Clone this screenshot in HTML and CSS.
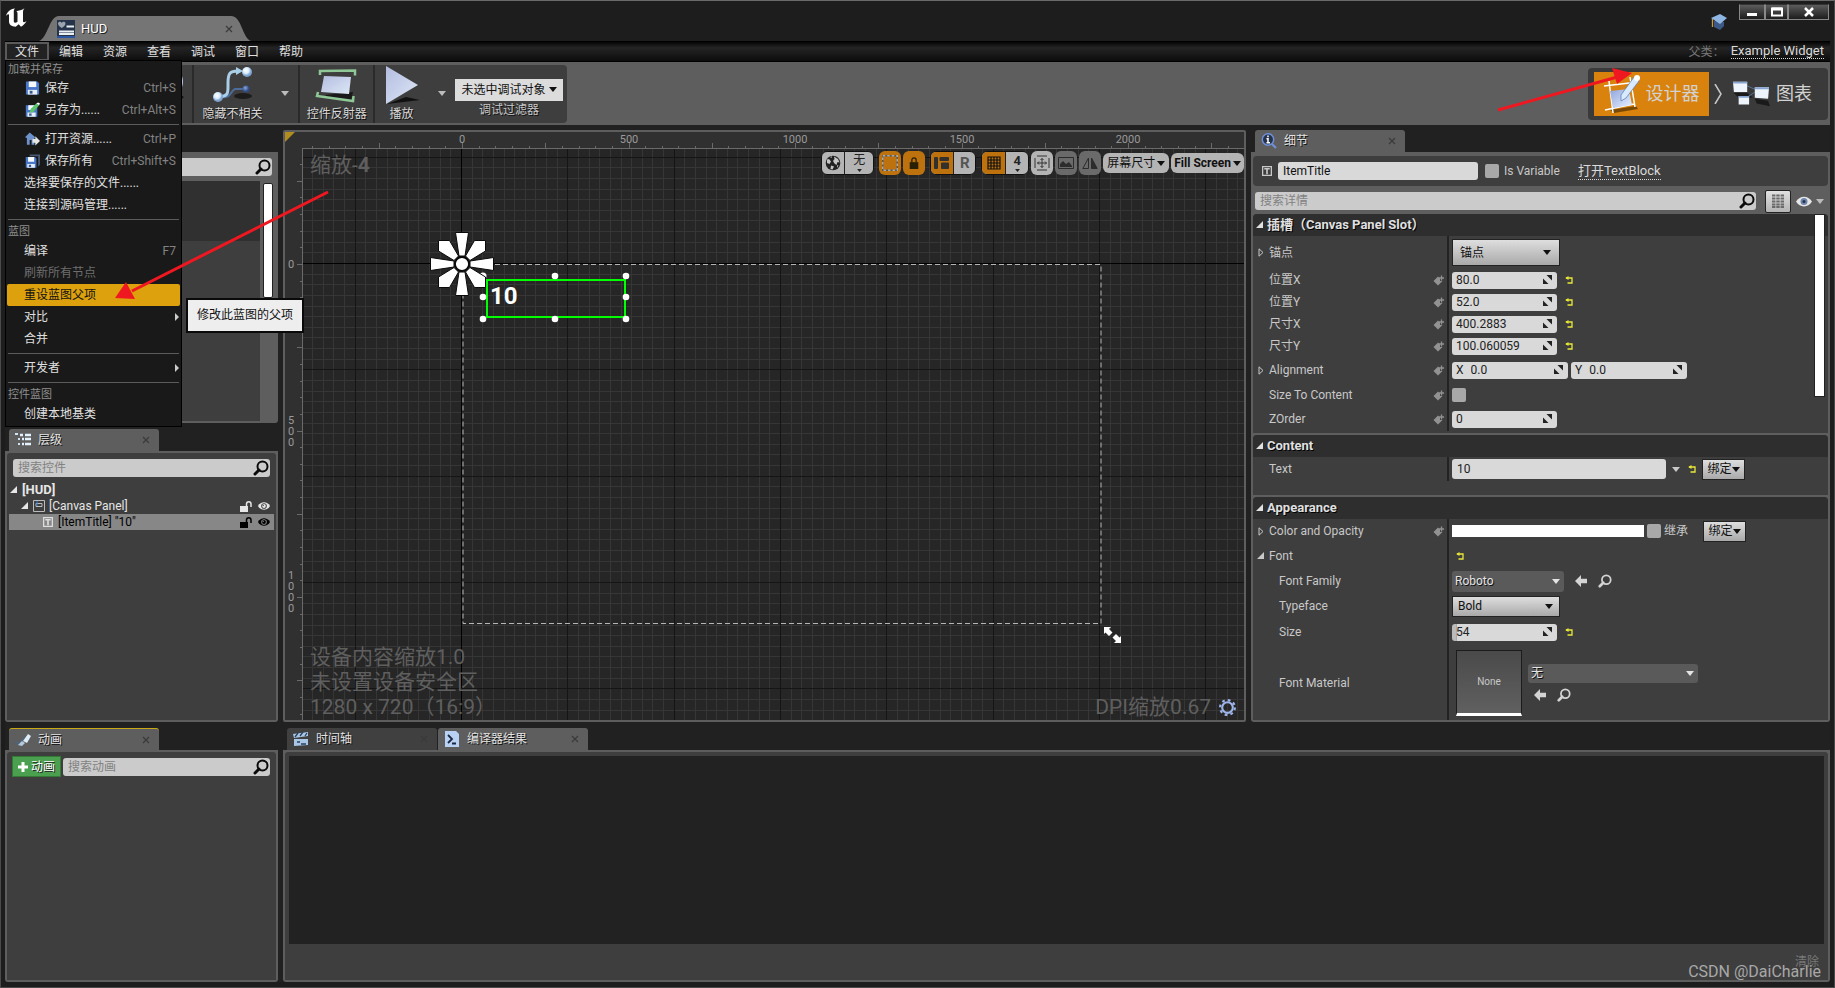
FILE: index.html
```html
<!DOCTYPE html>
<html lang="zh-CN">
<head>
<meta charset="utf-8">
<title>HUD</title>
<link rel="stylesheet" href="styles.css">
</head>
<body>
<svg class="defs" aria-hidden="true">
  <defs>
    <linearGradient id="blue" x1="0" y1="0" x2="1" y2="1"><stop offset="0" stop-color="#8fa4dc"/><stop offset="1" stop-color="#e8f2ff"/></linearGradient>
    <linearGradient id="steel" x1="0" y1="0" x2="1" y2="1"><stop offset="0" stop-color="#b4bce0"/><stop offset="1" stop-color="#dde8f6"/></linearGradient>
    <radialGradient id="ball" cx=".4" cy=".35"><stop offset="0" stop-color="#fff"/><stop offset=".6" stop-color="#d9ecfb"/><stop offset="1" stop-color="#7fa4d0"/></radialGradient>
    <radialGradient id="ball2" cx=".4" cy=".35"><stop offset="0" stop-color="#8ba6d8"/><stop offset="1" stop-color="#2f4a86"/></radialGradient>
  </defs>
  <symbol id="mag" viewBox="0 0 16 16"><circle cx="9.5" cy="6.5" r="5" fill="none" stroke="currentColor" stroke-width="2"/><path d="M6 10 2 14" stroke="currentColor" stroke-width="3" stroke-linecap="round"/></symbol>
  <symbol id="caret" viewBox="0 0 8 5"><path d="M0 0h8L4 5z" fill="currentColor"/></symbol>
  <symbol id="open" viewBox="0 0 8 8"><path d="M7 0v7H0z" fill="currentColor"/></symbol>
  <symbol id="closed" viewBox="0 0 6 9"><path d="M1 .8v7.400L5 4.500z" fill="none" stroke="currentColor"/></symbol>
  <symbol id="x" viewBox="0 0 8 8"><path d="m1 1 6 6M7 1 1 7" stroke="currentColor" stroke-width="1.200"/></symbol>
  <symbol id="spin" viewBox="0 0 10 10"><path d="M3.500 0H9v5.500zM0 3.500V9h5.500z" fill="currentColor"/></symbol>
  <symbol id="reset" viewBox="0 0 8 8"><path d="M1 2h6v5H2.500" fill="none" stroke="currentColor" stroke-width="1.300"/><path d="M3.500 0v4L.2 2z" fill="currentColor"/></symbol>
  <symbol id="key" viewBox="0 0 11 11"><path d="M5 1.500 7 3.500V6h2.500L5 10.500.5 6z" fill="#929292"/><path d="M8.500.5v5M6 3h5" stroke="#929292" stroke-width="1.300"/></symbol>
  <symbol id="eye" viewBox="0 0 14 10"><path d="M0 5C3-.8 11-.8 14 5 11 10.800 3 10.800 0 5z" fill="currentColor"/><circle cx="7" cy="5" r="3.300" fill="var(--hole)"/><circle cx="7" cy="5" r="2.200" fill="currentColor"/><circle cx="6.200" cy="4.200" r=".8" fill="var(--hole)"/></symbol>
  <symbol id="unlock" viewBox="0 0 12 11"><path d="M0 5h8v6H0z" fill="currentColor"/><path d="M6.500 5V3a2.200 2.200 0 0 1 4.500 0v3" fill="none" stroke="currentColor" stroke-width="1.500"/></symbol>
  <symbol id="left" viewBox="0 0 12 12"><path d="M0 6 6 0v3.800h6v4.400H6V12z" fill="currentColor"/></symbol>
  <symbol id="tbox" viewBox="0 0 11 11"><path d="M.7.7h9.600v9.600H.7z" fill="none" stroke="currentColor" stroke-width="1.400"/><path d="M2.500 3h6M5.500 3v6" stroke="currentColor" stroke-width="1.800"/></symbol>
  <symbol id="disk" viewBox="0 0 16 16"><path d="M1 1h12l2 2v12H1z" fill="#4a78c8"/><path d="M4 1h8v6H4z" fill="#f4f8ff"/><path d="M3 10h10v5H3z" fill="#e6ecf8"/><path d="M5 11h3v3H5z" fill="#35588f"/></symbol>
</svg>

<header class="titlebar">
  <svg class="logo" viewBox="0 0 24 20" aria-label="Unreal"><path d="M1 8C2 4 5 1 10 .500 8.500 2 8.800 3 8.800 5v8.500c0 1.500 2.200 1.500 3.700.300V5.500c0-1.500-.5-2-1.300-2.300C13.500 2.800 17 2 19.500.200c-1.200 1.500-1.500 2.500-1.500 4.300v8.700c0 1.500 1.800 1.300 3.500-.2-1 2.500-3.500 4.500-5.500 5.700l-2.300-2.400-3 2.400C6.500 18.500 4 16.500 4 13.500V7C4 5.500 2.500 6 1 8z" fill="#fff"/></svg>
  <div class="maintab">
    <svg class="maintab-shape" viewBox="0 0 212 25" preserveAspectRatio="none"><path d="M0 25C9 22 10 0 20 0h172c11 0 11 22 20 25z" fill="#757575"/></svg>
    <svg class="i18" viewBox="0 0 18 18"><path d="M0 0h18v18H0z" fill="#25344a"/><path d="M1 3.500C1 1.500 4 1 4.800 3 5.600 1 8.500 1.500 8.500 3.500S6 7 4.800 8C3.500 7 1 5.500 1 3.500z" fill="#9aa3ad"/><path d="M9.500 6.500H17M2 11.500h15M2 14h15" stroke="#e8eef4" stroke-width="1.800"/><path d="M0 17h18" stroke="#2f62c0" stroke-width="1.500"/></svg>
    <span>HUD</span>
    <button class="tabx" aria-label="关闭"><svg class="i8"><use href="#x"/></svg></button>
  </div>
  <svg class="cap" viewBox="0 0 16 16"><path d="M3 7v6l6 3 4-4V8z" fill="#3d5a86"/><path d="M0 4 9 0l7 4-7 6z" fill="#8fb6e2"/><path d="M1.500 5v8" stroke="#c99a4a" stroke-width="1.300"/></svg>
  <div class="winbtns">
    <button aria-label="最小化" class="w-min"><svg viewBox="0 0 12 10"><path d="M1 6h10v3H1z" fill="#fff"/></svg></button><button aria-label="最大化" class="w-max"><svg viewBox="0 0 12 10"><path d="M1 1.500h10v7H1z" fill="none" stroke="#fff" stroke-width="2"/><path d="M1 2h10" stroke="#fff" stroke-width="3"/></svg></button><button aria-label="关闭窗口" class="w-close"><svg viewBox="0 0 12 10"><path d="m2 1 8 8M10 1 2 9" stroke="#fff" stroke-width="2.500"/></svg></button>
  </div>
</header>

<nav class="menubar">
  <button class="on">文件</button><button>编辑</button><button>资源</button><button>查看</button><button>调试</button><button>窗口</button><button>帮助</button>
  <span class="parent">父类：</span><a href="#">Example Widget</a>
</nav>

<div class="toolbar">
  <div class="tools">
    <div class="tool-lead"><svg viewBox="0 0 6 60"><path d="M0 9c4 1 5 8 3 14l-3 3z" fill="#b9c9ea"/><path d="m0 30 5 3-5 5z" fill="#151515"/></svg></div>
    <button class="tool hide"><svg viewBox="0 0 44 36"><ellipse cx="32" cy="29" rx="9" ry="3" fill="#1c1c1c"/><path d="M9 30c12 2 10-6 15-8h8" fill="none" stroke="#4c6c9c" stroke-width="2"/><path d="M8 30c10-1 9-4 9-14s2-12 10-12" fill="none" stroke="#a9cfe8" stroke-width="3"/><path d="m25 0 7 4-7 4z" fill="#a9cfe8"/><circle cx="7" cy="30" r="5" fill="url(#ball)"/><circle cx="36" cy="5" r="5" fill="url(#ball)"/><circle cx="35" cy="22" r="3.500" fill="url(#ball2)"/></svg><span>隐藏不相关</span></button>
    <button class="drop" aria-label="隐藏选项"><svg class="caret"><use href="#caret"/></svg></button>
    <button class="tool reflect"><svg viewBox="0 0 44 36"><path d="m10 28 28-3-2 8-22-2z" fill="#1a1a1a"/><path d="M9 9 36 10l-2 17-28-2z" fill="url(#steel)"/><path d="M5 8V4l35-.500v5M3 25l-1 4 36 5 .500-5" fill="none" stroke="#8fc796" stroke-width="2.500"/></svg><span>控件反射器</span></button>
    <button class="tool play"><svg viewBox="0 0 36 40"><path d="m3 38 33-4-14-3z" fill="#111"/><path d="M2 0v38l32-19z" fill="url(#steel)"/></svg><span>播放</span></button>
    <button class="drop" aria-label="播放选项"><svg class="caret"><use href="#caret"/></svg></button>
    <div class="debug"><button>未选中调试对象<svg class="caret"><use href="#caret"/></svg></button><span>调试过滤器</span></div>
  </div>
  <div class="modes">
    <button class="mode active"><svg viewBox="0 0 38 40"><path d="m8 36 26-4 2 3-24 4z" fill="#7a4a05"/><path d="M2 12 36 8M3 36l29-6M7 7l4 32M28 3l5 30" stroke="#fff" stroke-width="1.500"/><path d="m8 17 19-2 3 16-19 3z" fill="url(#blue)"/><path d="m19 27 0-6L32 3l5 4-13 17z" fill="#d9eaff" stroke="#5577a8" stroke-width=".7"/><circle cx="35" cy="4" r="3" fill="#fff"/></svg>设计器</button>
    <svg class="chev" viewBox="0 0 8 20"><path d="m1 0 6 10-6 10" fill="none" stroke="#c8c8c8" stroke-width="1.500"/></svg>
    <button class="mode"><svg viewBox="0 0 40 30"><path d="M2 14h14l6 5-16-1zM24 20l14 2 2 6-14-3z" fill="#1a1a1a"/><path d="M15 6 24 10M15 19l9-6" stroke="#5c7592"/><path d="M1 2h15v11H2zM24 8h15l-1 12-14-1zM7 17h11v9H7z" fill="#eef4fb"/><path d="M1 2h15v2H1zM24 8h15v2H24zM7 17h11v2H7z" fill="#88a5d2"/></svg>图表</button>
  </div>
</div>

<main class="work">
  <div class="row top">
    <aside class="leftcol">
      <section class="dock palette">
        <div class="frame"><div class="search"><input type="text" aria-label="搜索调色板"><svg class="i16"><use href="#mag"/></svg></div>
          <div class="pal-body"><div class="pal-list"></div><div class="pal-scroll"></div></div></div>
      </section>
      <section class="dock">
        <div class="tabs"><div class="tab"><svg class="i16" viewBox="0 0 16 14"><path d="M0 1h3M3 6h2M3 11h2" stroke="#cfe3f5" stroke-width="2"/><path d="M5 2h3M7 6h2M7 11h2M10 2h6M10 6h6M10 11h6" stroke="#e4f2ff" stroke-width="2.500"/></svg><span>层级</span><button class="tabx" aria-label="关闭层级"><svg class="i8"><use href="#x"/></svg></button></div></div>
        <div class="frame"><div class="pane">
          <div class="search"><input type="text" placeholder="搜索控件" aria-label="搜索控件"><svg class="i16"><use href="#mag"/></svg></div>
          <ul class="tree">
            <li class="t0"><svg class="i8"><use href="#open"/></svg><b>[HUD]</b></li>
            <li class="t1"><svg class="i8"><use href="#open"/></svg><svg class="i12" viewBox="0 0 12 12"><path d="M.5.5h11v11H.5z" fill="none" stroke="#bbb"/><path d="M3 3.500h6v3H3z" fill="none" stroke="#bbb"/><path d="M4 1v5" stroke="#2a7fd0"/></svg><span>[Canvas Panel]</span><svg class="i12 end"><use href="#unlock"/></svg><svg class="i12"><use href="#eye"/></svg></li>
            <li class="t2"><svg class="i10"><use href="#tbox"/></svg><span>[ItemTitle] "10"</span><svg class="i12 end"><use href="#unlock"/></svg><svg class="i12"><use href="#eye"/></svg></li>
          </ul>
        </div></div>
      </section>
    </aside>

    <section class="viewport" id="viewport">
      <svg class="grid" id="grid" aria-hidden="true"></svg>
      <svg class="stage" aria-hidden="true">
        <path d="M0 0h10L0 10z" fill="#b18c1e"/>
        <path d="M178 132.500h638v359H178z" fill="none" stroke="#b5b5b5" stroke-dasharray="5 3"/>
        <g fill="#fff"><circle cx="198" cy="144" r="3.500"/></g>
        <g transform="translate(177 132)" fill="#fff" stroke="#0a0a0a" stroke-width="1">
          <g id="petals"><path d="M-6.500-31.500h13L3-8h-6z"/><path d="M-31.500-6.500v13L-8 3v-6z"/><path d="M-6.500 31.500h13L3 8h-6z"/><path d="M31.500-6.500v13L8 3v-6z"/>
          <path d="M-23.500-23.500h11L-3.500-8-8-3.500-23.500-13z"/><path d="M23.500-23.500h-11L3.500-8 8-3.500 23.500-13z"/><path d="M-23.500 23.500h11L-3.500 8-8 3.500-23.500 13z"/><path d="M23.500 23.500h-11L3.500 8 8 3.500 23.500 13z"/></g>
          <circle r="7" stroke-width="1.800"/>
        </g>
        <path d="M202 148h138v37H202z" fill="none" stroke="#0f0" stroke-width="2"/>
        <g fill="#fff"><circle cx="270" cy="144" r="3.300"/><circle cx="341" cy="144" r="3.300"/><circle cx="198" cy="165" r="3.300"/><circle cx="341" cy="165" r="3.300"/><circle cx="198" cy="187" r="3.300"/><circle cx="270" cy="187" r="3.300"/><circle cx="341" cy="187" r="3.300"/></g>
        <text x="205" y="172" class="item">10</text>
        <path d="M819 495h7l-2 2 3.500 3.500-3.500 3.500-3.500-3.500-1.500 1.500zM836 511h-7l2-2-3.500-3.500 3.500-3.500 3.500 3.500 1.500-1.500z" fill="#fff"/>
      </svg>
      <div class="zoomlabel">缩放-<b>4</b></div>
      <div class="notes"><div>设备内容缩放1.0</div><div>未设置设备安全区</div><div>1280 x 720（16:9）</div></div>
      <div class="dpi">DPI缩放0.67<button aria-label="DPI设置"><svg viewBox="0 0 16 16"><circle cx="8" cy="8" r="5" fill="none" stroke="#9db4ea" stroke-width="2"/><circle cx="8" cy="8" r="7" fill="none" stroke="#9db4ea" stroke-width="2" stroke-dasharray="2.600 2.900"/></svg></button></div>
      <div class="vptools">
        <div class="grp"><button class="w23" aria-label="本地化"><svg class="i16" viewBox="0 0 16 16"><circle cx="8" cy="8" r="7.300" fill="#222"/><path d="M9 1.500 13 4l1.500 3.500-2-.5-1 3-2-1.500L8 6l1.500-2zM2 4.500l2-.5 2 2.500L4.500 9 2 8zM6 10.500l3 1-1.500 3-2-.5zM5 2l2-.8L6.500 3zM12 10.500l1.500-.5-1.500 3z" fill="#c4c4c4"/></svg></button><button class="w29 two">无<svg class="mini"><use href="#caret"/></svg></button></div>
        <button class="solo org gapl" aria-label="显示轮廓"><svg class="i16" viewBox="0 0 16 16"><path d="M.7.7h14.600v14.600H.7z" fill="none" stroke="#5c564c" stroke-width="1.500"/><path d="M.7.7h14.600v14.600H.7z" fill="none" stroke="#aaa" stroke-width="1.500" stroke-dasharray="2.500 2"/></svg></button>
        <button class="solo org" aria-label="锁定"><svg class="i12" viewBox="0 0 12 14"><path d="M1 6h10v8H1z" fill="#2a2005"/><path d="M3.500 6V3.500a2.500 2.500 0 0 1 5 0V6" fill="none" stroke="#2a2005" stroke-width="1.500"/></svg></button>
        <div class="grp gapl"><button class="w23 org" aria-label="布局"><svg class="i16" viewBox="0 0 16 14"><rect y="1" width="4" height="12" rx="1" fill="#33312e"/><rect x="5.500" y="1" width="9.500" height="4" rx="1" fill="#33312e"/><rect x="7" y="6.500" width="8" height="6.500" rx="1" fill="#33312e"/></svg></button><button class="w23 r">R</button></div>
        <div class="grp gapl"><button class="w24 org" aria-label="网格"><svg class="i14" viewBox="0 0 14 14"><path d="M1 1h12v12H1zM4 1v12M7 1v12M10 1v12M1 4h12M1 7h12M1 10h12" fill="none" stroke="#111" stroke-width="1.200"/></svg></button><button class="w24 two"><b>4</b><svg class="mini"><use href="#caret"/></svg></button></div>
        <button class="solo" aria-label="缩放到合适"><svg class="i16" viewBox="0 0 16 16"><path d="M3 1h10M3 15h10M1 3v10M15 3v10M3.500 8h9M8 3.500v9M5 6.500 3.500 8 5 9.500M11 6.500 12.500 8 11 9.500M6.500 5 8 3.500 9.500 5M6.500 11 8 12.500 9.500 11" fill="none" stroke="#333"/></svg></button>
        <button class="solo dim" aria-label="背景"><svg class="i16" viewBox="0 0 16 12"><path d="M.5.5h15v11H.5z" fill="none" stroke="#2c2c2c"/><path d="M2 10V7l3-3 3 3 3-2 3 4v1z" fill="#2c2c2c"/></svg></button>
        <button class="solo dim" aria-label="镜像"><svg class="i16" viewBox="0 0 16 12"><path d="M6.500 1v10.500H.8zM9.500 1v10.500h5.700z" fill="none" stroke="#2c2c2c"/><path d="M9.500 1v10.500h5.700z" fill="#2c2c2c"/></svg></button>
        <button class="pill">屏幕尺寸<svg class="caret"><use href="#caret"/></svg></button>
        <button class="pill"><b>Fill Screen</b><svg class="caret"><use href="#caret"/></svg></button>
      </div>
    </section>

    <section class="dock details">
      <div class="tabs"><div class="tab"><svg class="i16" viewBox="0 0 16 16"><circle cx="7" cy="6.500" r="5.700" fill="#25324a" stroke="#6f8fd8" stroke-width="1.500"/><path d="m11 11 4 4" stroke="#6f8fd8" stroke-width="2.200"/><path d="M7 2.500v1.800M5.500 5.800H7v4M5.500 9.800h3.500" stroke="#fff" stroke-width="1.500" fill="none"/></svg><span>细节</span><button class="tabx" aria-label="关闭细节"><svg class="i8"><use href="#x"/></svg></button></div></div>
      <div class="frame">
        <div class="namerow"><svg class="i10"><use href="#tbox"/></svg><input type="text" value="ItemTitle" aria-label="名称"><label><input type="checkbox">Is Variable</label><a href="#">打开TextBlock</a></div>
        <div class="findrow"><div class="search"><input type="text" placeholder="搜索详情" aria-label="搜索详情"><svg class="i16"><use href="#mag"/></svg></div><button class="matrix" aria-label="属性矩阵"><svg class="i14" viewBox="0 0 14 14"><path d="M1 1.500h12M1 4.500h12M1 7.500h12M1 10.500h12M1 13h12" stroke="#6a6a6a" stroke-width="2" stroke-dasharray="3.400 .9"/></svg></button><button class="viewopt" aria-label="视图选项"><svg viewBox="0 0 16 11"><path d="M0 5.500C4-1 12-1 16 5.500 12 12 4 12 0 5.500z" fill="#e6e6e6"/><circle cx="8" cy="5.500" r="3.500" fill="#6d84ab"/><circle cx="8" cy="5.500" r="1.500" fill="#26334d"/></svg><svg class="caret"><use href="#caret"/></svg></button></div>
        <div class="props">
          <div class="sect">
            <h3><svg class="i8"><use href="#open"/></svg>插槽（Canvas Panel Slot）</h3>
            <div class="p h33"><div class="k"><svg class="arr"><use href="#closed"/></svg>锚点</div><div class="v"><button class="big">锚点<svg class="caret"><use href="#caret"/></svg></button></div></div>
            <div class="p h22"><label class="k" for="px">位置X<svg class="key"><use href="#key"/></svg></label><div class="v"><span class="num"><input id="px" type="text" value="80.0"><svg class="i10"><use href="#spin"/></svg></span><svg class="reset"><use href="#reset"/></svg></div></div>
            <div class="p h22"><label class="k" for="py">位置Y<svg class="key"><use href="#key"/></svg></label><div class="v"><span class="num"><input id="py" type="text" value="52.0"><svg class="i10"><use href="#spin"/></svg></span><svg class="reset"><use href="#reset"/></svg></div></div>
            <div class="p h22"><label class="k" for="sx">尺寸X<svg class="key"><use href="#key"/></svg></label><div class="v"><span class="num"><input id="sx" type="text" value="400.2883"><svg class="i10"><use href="#spin"/></svg></span><svg class="reset"><use href="#reset"/></svg></div></div>
            <div class="p h22"><label class="k" for="sy">尺寸Y<svg class="key"><use href="#key"/></svg></label><div class="v"><span class="num"><input id="sy" type="text" value="100.060059"><svg class="i10"><use href="#spin"/></svg></span><svg class="reset"><use href="#reset"/></svg></div></div>
            <div class="p h26"><div class="k"><svg class="arr"><use href="#closed"/></svg>Alignment<svg class="key"><use href="#key"/></svg></div><div class="v tight"><label class="num wide">X<input type="text" value="0.0"><svg class="i10"><use href="#spin"/></svg></label><label class="num wide">Y<input type="text" value="0.0"><svg class="i10"><use href="#spin"/></svg></label></div></div>
            <div class="p h24"><label class="k" for="stc">Size To Content<svg class="key"><use href="#key"/></svg></label><div class="v"><input id="stc" type="checkbox"></div></div>
            <div class="p h24"><label class="k" for="zo">ZOrder<svg class="key"><use href="#key"/></svg></label><div class="v"><span class="num"><input id="zo" type="text" value="0"><svg class="i10"><use href="#spin"/></svg></span></div></div>
          </div>
          <div class="sect padded">
            <h3><svg class="i8"><use href="#open"/></svg>Content</h3>
            <div class="p h24"><label class="k" for="tx">Text</label><div class="v"><input id="tx" class="long" type="text" value="10"><svg class="caret"><use href="#caret"/></svg><svg class="reset"><use href="#reset"/></svg><button class="bind">绑定<svg class="caret"><use href="#caret"/></svg></button></div></div>
          </div>
          <div class="sect last">
            <h3><svg class="i8"><use href="#open"/></svg>Appearance</h3>
            <div class="p h24"><div class="k"><svg class="arr"><use href="#closed"/></svg>Color and Opacity<svg class="key"><use href="#key"/></svg></div><div class="v tight"><button class="swatch" aria-label="颜色"></button><label class="inherit"><input type="checkbox">继承</label><button class="bind">绑定<svg class="caret"><use href="#caret"/></svg></button></div></div>
            <div class="p h26"><div class="k"><svg class="arr full"><use href="#open"/></svg>Font</div><div class="v"><svg class="reset in"><use href="#reset"/></svg></div></div>
            <div class="p h24"><label class="k sub" for="ff">Font Family</label><div class="v asset"><span class="combo"><select id="ff"><option>Roboto</option></select><svg class="caret"><use href="#caret"/></svg></span><svg class="i12"><use href="#left"/></svg><svg class="i14"><use href="#mag"/></svg></div></div>
            <div class="p h26"><label class="k sub" for="tf">Typeface</label><div class="v"><span class="combo light"><select id="tf"><option>Bold</option></select><svg class="caret"><use href="#caret"/></svg></span></div></div>
            <div class="p h26"><label class="k sub" for="fs">Size</label><div class="v"><span class="num slid"><input id="fs" type="text" value="54"><svg class="i10"><use href="#spin"/></svg></span><svg class="reset"><use href="#reset"/></svg></div></div>
            <div class="p grow"><label class="k sub" for="fm">Font Material</label><div class="v mat"><div class="thumb">None</div><div class="matsel"><span class="combo w170"><select id="fm"><option>无</option></select><svg class="caret"><use href="#caret"/></svg></span><div class="asset"><svg class="i12"><use href="#left"/></svg><svg class="i14"><use href="#mag"/></svg></div></div></div></div>
          </div>
          <div class="scroll"></div>
        </div>
      </div>
    </section>
  </div>

  <div class="row bottom">
    <section class="dock anim">
      <div class="tabs"><div class="tab lit"><svg class="i16" viewBox="0 0 16 14"><path d="M0 9c2-1 3 1 4 3l5-7" fill="none" stroke="#4d6680" stroke-width="1.500"/><path d="m8 8 5-7 3 2-4 7z" fill="#dcecf8"/><path d="m3 12 4-4 3 2-3 3z" fill="#b5c8dc"/></svg><span>动画</span><button class="tabx" aria-label="关闭动画"><svg class="i8"><use href="#x"/></svg></button></div></div>
      <div class="frame"><div class="pane"><div class="animrow"><button class="add"><svg class="i10" viewBox="0 0 10 10"><path d="M5 0v10M0 5h10" stroke="#fff" stroke-width="3"/></svg>动画</button><div class="search"><input type="text" placeholder="搜索动画" aria-label="搜索动画"><svg class="i16"><use href="#mag"/></svg></div></div></div></div>
    </section>
    <section class="dock results">
      <div class="tabs"><div class="tab off"><svg class="i16" viewBox="0 0 16 14"><path d="m0 2 15-2v4L1 6zM1 7h14v6l-14 1z" fill="#a9c6e6"/><path d="m2 5 3-4M7 4l3-4M12 4l2-3M4 10h3M8 12h5" stroke="#29415f" stroke-width="1.300"/></svg><span>时间轴</span><button class="tabx" aria-label="关闭时间轴"><svg class="i8"><use href="#x"/></svg></button></div><div class="tab"><svg class="i16" viewBox="0 0 16 16"><path d="M1 0h11l3 3v13H1z" fill="#b9d2f4"/><path d="m4 4 4 4-4 4M8 12.500h4" fill="none" stroke="#1c2740" stroke-width="1.800"/></svg><span>编译器结果</span><button class="tabx" aria-label="关闭编译器结果"><svg class="i8"><use href="#x"/></svg></button></div></div>
      <div class="frame"><div class="pane logpane"><div class="log"></div><button class="clear">清除</button></div></div>
    </section>
  </div>
</main>

<div class="popup" role="menu">
  <div class="mh">加载并保存</div>
  <button role="menuitem" class="ic"><svg class="i16"><use href="#disk"/></svg>保存<kbd>Ctrl+S</kbd></button>
  <button role="menuitem" class="ic"><svg class="i16" viewBox="0 0 16 16"><use href="#disk" y="2" width="14" height="14"/><path d="m5 11 1-4 6-6 3 2-6 7z" fill="#5bc46a"/><path d="m12 1 3 2 1-2-2-1z" fill="#fff"/></svg>另存为......<kbd>Ctrl+Alt+S</kbd></button>
  <hr>
  <button role="menuitem" class="ic"><svg class="i16" viewBox="0 0 16 16"><path d="m0 6 5-5 6 5-1 1v7H7V9H5v5H2V7z" fill="#6e93cc"/><path d="M8 8h3V5l5 5-5 5v-3H8z" fill="#e6e6e6"/></svg>打开资源......<kbd>Ctrl+P</kbd></button>
  <button role="menuitem" class="ic"><svg class="i16" viewBox="0 0 16 16"><path d="M5 1h11v11l-2 2V3H5z" fill="#4a5872"/><use href="#disk" y="3" width="13" height="13"/></svg>保存所有<kbd>Ctrl+Shift+S</kbd></button>
  <button role="menuitem">选择要保存的文件......</button>
  <button role="menuitem">连接到源码管理......</button>
  <hr>
  <div class="mh">蓝图</div>
  <button role="menuitem">编译<kbd>F7</kbd></button>
  <button role="menuitem" disabled>刷新所有节点</button>
  <button role="menuitem" class="hot">重设蓝图父项</button>
  <button role="menuitem">对比<i></i></button>
  <button role="menuitem">合并</button>
  <hr>
  <button role="menuitem">开发者<i></i></button>
  <hr>
  <div class="mh">控件蓝图</div>
  <button role="menuitem">创建本地基类</button>
</div>
<div class="tooltip" role="tooltip">修改此蓝图的父项</div>
<svg class="callout c1" viewBox="0 0 220 112"><path d="M216 2 20 101" stroke="#f01820" stroke-width="3"/><path d="M3 108 14 92l9 17z" fill="#f01820"/></svg>
<svg class="callout c2" viewBox="0 0 140 48"><path d="M3 43 126 9" stroke="#f01820" stroke-width="3"/><path d="m137 6-20-5 5 16z" fill="#f01820"/></svg>
<div class="watermark">CSDN @DaiCharlie</div>
<script src="grid.js"></script>
</body>
</html>
```
FILE: styles.css
```css
* { box-sizing: border-box; }
body {
  margin: 0; padding: 0 4px 5px; min-height: 100vh; position: relative;
  display: flex; flex-direction: column;
  background: #1d1d1d; border: 1px solid #4a4a4a; border-top-color: #6a6a6a;
  color: #c8c8c8; font: 12px/16px Roboto, "Noto Sans CJK SC", sans-serif;
}
button, input, select { font: inherit; color: inherit; border: 0; padding: 0; margin: 0; background: none; min-width: 0; }
button { display: flex; align-items: center; justify-content: center; white-space: nowrap; }
svg { flex: none; display: block; }
a { color: #dadada; text-decoration: none; border-bottom: 1px dotted #dadada; }
.defs { position: absolute; width: 0; height: 0; }
.i8 { width: 8px; height: 8px; }
.i10 { width: 10px; height: 10px; }
.i12 { width: 12px; height: 12px; }
.i14 { width: 14px; height: 14px; }
.i16 { width: 16px; height: 16px; }
.i18 { width: 18px; height: 18px; }
.caret { width: 8px; height: 5px; }
input[type=checkbox] { appearance: none; width: 14px; height: 14px; background: #a8a8a8; border-radius: 2px; }

.titlebar { height: 40px; display: flex; align-items: flex-start; }
.logo { width: 24px; height: 20px; margin-top: 7px; }
.maintab { position: relative; width: 212px; height: 25px; margin: 15px 0 0 10px; padding: 0 18px; display: flex; align-items: center; gap: 6px; color: #fff; font-size: 13px; text-shadow: 1px 1px #222; }
.maintab > * { position: relative; }
.maintab .maintab-shape { position: absolute; left: 0; top: 0; width: 100%; height: 100%; }
.tabx { margin-left: auto; color: #3a3a3a; }
.cap { width: 16px; height: 16px; margin: 13px 12px 0 auto; }
.winbtns { display: flex; margin-top: 3px; padding-right: 1px; }
.winbtns button { height: 16px; background: linear-gradient(#5c5c5c, #1c1c1c); border: 1px solid #888; border-top-color: #333; }
.winbtns svg { width: 12px; height: 10px; }
.w-min { width: 26px; } .w-max { width: 23px; } .w-close { width: 41px; }

.menubar { height: 21px; display: flex; align-items: center; background: linear-gradient(#050505, #242424 30%, #0c0c0c); border-top: 1px solid #000; border-bottom: 1px solid #000; padding-right: 6px; }
.menubar button { padding: 0 10px; height: 19px; color: #e0e0e0; }
.menubar .on { border: 2px solid #5a5a5a; padding: 0 8px; background: #222; }
.parent { margin-left: auto; color: #777; margin-right: 6px; }
.menubar a { font-size: 13px; line-height: 14px; }

.toolbar { background: #5e5e5e; height: 63px; display: flex; align-items: center; padding-right: 2px; }
.tools { display: flex; height: 58px; background: #3e3e3e; border-radius: 0 4px 4px 0; width: 562px; }
.tool-lead { width: 189px; display: flex; justify-content: flex-end; border-right: 2px solid #2a2a2a; padding-right: 7px; }
.tool-lead svg { width: 6px; height: 58px; }
.tool { flex-direction: column; justify-content: flex-end; color: #d8d8d8; text-shadow: 1px 1px #111; line-height: 14px; padding-bottom: 2px; }
.tool svg { width: 44px; height: 36px; }
.tool span { margin-top: 4px; }
.hide { width: 78px; }
.reflect { width: 77px; border-left: 2px solid #2a2a2a; border-right: 2px solid #2a2a2a; }
.play { width: 53px; }
.tool.play svg { width: 36px; height: 40px; }
.tool.play span { margin-top: 1px; }
.drop { width: 27px; color: #bcbcbc; }
.debug { display: flex; flex-direction: column; align-items: center; justify-content: center; gap: 2px; margin-left: auto; padding-right: 4px; padding-top: 8px; }
.debug button { width: 108px; height: 22px; gap: 3px; background: #dcdcdc; color: #111; }
.debug span { line-height: 14px; text-shadow: 1px 1px #111; }
.modes { margin-left: auto; background: #3a3a3a; border-radius: 4px; height: 52px; padding: 4px 6px; display: flex; align-items: center; width: 240px; }
.mode { font-size: 18px; color: #d2d2d2; height: 44px; gap: 6px; padding: 0 8px 0 6px; }
.mode svg { width: 38px; height: 40px; }
.mode.active { background: #d9820d; width: 115px; }
.chev { width: 8px; height: 20px; margin: 0 4px 0 5px; }

.work { flex: 1; display: flex; flex-direction: column; gap: 6px; padding-top: 5px; background: #212121; min-height: 0; }
.row { display: flex; gap: 5px; min-height: 0; }
.top { flex: 592 1 0; }
.bottom { flex: 254 1 0; }
.leftcol { width: 273px; flex: none; display: flex; flex-direction: column; gap: 6px; }
.leftcol .dock { flex: 1 1 0; min-height: 0; }
.dock { display: flex; flex-direction: column; }
.palette .frame { margin-top: 22px; }
.frame { flex: 1; background: #5e5e5e; border-radius: 0 0 3px 3px; padding: 2px; display: flex; flex-direction: column; min-height: 0; }
.tabs { display: flex; gap: 1px; padding-left: 4px; height: 22px; }
.tab { width: 150px; background: #5e5e5e; border-radius: 3px 3px 0 0; display: flex; align-items: center; padding: 0 9px 0 6px; gap: 7px; color: #e2e2e2; text-shadow: 1px 1px #111; }
.tab.lit { border-top: 1px solid #c9a916; }
.tab.off { background: #404040; }
.pane { flex: 1; background: #3e3e3e; border-radius: 3px 3px 0 0; padding: 6px; }
.search { display: flex; align-items: center; background: #cbcbcb; border-radius: 3px; height: 18px; color: #0a0a0a; padding: 0 1px 0 5px; flex: 1; }
.search input { flex: 1; }
.search input::placeholder { color: #828282; opacity: 1; }
.palette .search { flex: none; margin: 4px 4px 5px; }
.pal-body { flex: 1; display: flex; justify-content: flex-end; }
.pal-list { flex: 1; background: linear-gradient(#303030 60px, #3e3e3e 60px); }
.pal-scroll { width: 10px; margin: 2px 3px 0; height: 115px; background: #fff; border: 1px solid #222; border-radius: 2px; }
.tree { list-style: none; margin: 5px -4px 0; padding: 0; color: #e6e6e6; --hole: #3e3e3e; }
.tree li { display: flex; align-items: center; height: 16px; gap: 4px; padding-right: 4px; }
.tree .end { margin-left: auto; margin-right: 2px; height: 11px; }
.tree .t0 { font-size: 13px; padding-left: 1px; }
.tree .t1 { padding-left: 12px; }
.tree .t2 { padding-left: 34px; background: #878787; color: #000; --hole: #878787; gap: 5px; }
.tree .t2 .i10 { color: #ddd; }
.tree .t2 .i12:last-child { margin-left: -1px; }

.viewport { flex: 1; position: relative; overflow: hidden; background: #303030; border: 2px solid #5e5e5e; border-radius: 2px; }
.grid, .stage { position: absolute; left: 0; top: 0; width: 100%; height: 100%; }
.grid text { font-size: 11px; fill: #9a9a9a; text-anchor: middle; }
.item { font-size: 24px; font-weight: 700; fill: #fff; }
.zoomlabel, .notes, .dpi { position: absolute; font-size: 21px; line-height: 25px; color: #5f5f5f; }
.zoomlabel { left: 25px; top: 21px; }
.notes { left: 25px; bottom: 0; }
.dpi { right: 8px; bottom: 0; display: flex; align-items: center; gap: 8px; }
.dpi svg { width: 17px; height: 17px; }
.vptools { position: absolute; right: 0; top: 19px; display: flex; align-items: center; gap: 2px; color: #222; }
.grp { display: flex; height: 24px; border-radius: 6px; overflow: hidden; background: #b4b4b4; border: 1px solid #111; }
.grp button + button { border-left: 1px solid #222; }
.w23 { width: 22px; } .w24 { width: 23px; } .w29 { width: 29px; }
.two { flex-direction: column; line-height: 13px; gap: 2px; }
.two b { font-size: 13px; }
.mini { width: 5px; height: 3px; }
.r { font-size: 15px; font-weight: 700; color: #555; }
.solo { width: 22px; height: 24px; border-radius: 6px; background: #b4b4b4; }
.org { background: #bd720d; }
.dim { background: #6a6a6a; }
.gapl { margin-left: 3px; }
.pill { height: 20px; border-radius: 6px; background: #b4b4b4; padding: 0 4px; gap: 2px; color: #111; }
.pill b { font-size: 12px; }
.pill:last-child { padding: 0 3px; }

.details { width: 579px; flex: none; }
.namerow { display: flex; align-items: center; height: 30px; margin: 2px 0; padding-left: 9px; background: #3e3e3e; border-radius: 4px; }
.namerow > input { width: 200px; height: 18px; background: #d9d9d9; color: #111; border-radius: 3px; padding-left: 5px; margin: 0 7px 0 6px; }
.namerow label { display: flex; align-items: center; gap: 5px; }
.namerow a { margin-left: 18px; font-size: 13px; line-height: 17px; }
.findrow { display: flex; align-items: center; height: 26px; padding: 0 4px 0 2px; }
.matrix { width: 26px; height: 23px; margin: 0 5px 0 9px; background: linear-gradient(#e0e0e0, #b4b4b4); border: 1px solid #222; border-radius: 2px; }
.viewopt { gap: 4px; color: #bbb; }
.viewopt svg:first-child { width: 16px; height: 11px; }
.props { position: relative; flex: 1; display: flex; flex-direction: column; gap: 2px; }
.sect { background: #3e3e3e; border-radius: 4px 4px 0 0; padding-bottom: 2px; }
.padded { padding-bottom: 14px; }
.last { flex: 1; display: flex; flex-direction: column; padding: 0; }
.sect h3 { margin: 0; height: 22px; background: #2e2e2e; display: flex; align-items: center; gap: 3px; padding-left: 3px; font-size: 13px; font-weight: 700; color: #e0e0e0; text-shadow: 1px 1px #000; border-radius: 4px 4px 0 0; }
.p { display: flex; }
.h22 { height: 22px; } .h24 { height: 24px; } .h26 { height: 26px; } .h33 { height: 33px; }
.grow { flex: 1; }
.k { position: relative; width: 196px; flex: none; display: flex; align-items: center; padding: 0 3px 0 16px; border-right: 2px solid #232323; }
.k.sub { padding-left: 26px; }
.arr { position: absolute; left: 5px; width: 6px; height: 9px; }
.arr.full { left: 4px; width: 8px; height: 8px; }
.key { width: 11px; height: 11px; margin-left: auto; }
.v { flex: 1; display: flex; align-items: center; gap: 8px; padding-left: 3px; }
.tight { gap: 3px; }
.num { width: 105px; height: 17px; background: #d9d9d9; color: #222; border-radius: 3px; display: flex; align-items: center; padding: 0 4px; }
.num input { flex: 1; width: 0; }
.wide { width: 116px; }
.wide input { margin-left: 7px; }
.slid { background: linear-gradient(90deg, #bbb 4px, #999 5px, #d9d9d9 5px); }
.reset { width: 8px; height: 8px; color: #e8e838; }
.reset.in { margin-left: 4px; }
.big, .light { width: 108px; height: 27px; justify-content: space-between; padding: 0 8px 0 7px; background: linear-gradient(#dedede, #a9a9a9); color: #111; border: 1px solid #222; }
.long { width: 214px; height: 20px; background: #d9d9d9; color: #222; border-radius: 3px; padding-left: 5px; margin-right: -2px; }
.v .long ~ .bind { margin-left: -2px; }
.bind { width: 43px; height: 21px; background: linear-gradient(#dedede, #a9a9a9); border: 1px solid #222; color: #111; }
.inherit { display: flex; align-items: center; gap: 3px; width: 53px; }
.swatch { width: 192px; height: 12px; background: #fff; }
.combo { position: relative; width: 112px; height: 21px; display: flex; align-items: center; background: #5a5a5a; border-radius: 3px; color: #e4e4e4; padding-right: 4px; }
.combo select { appearance: none; flex: 1; padding-left: 3px; text-shadow: 1px 1px #111; }
.combo.light { width: 108px; color: #111; padding: 0 6px 0 2px; background: linear-gradient(#dedede, #a9a9a9); border-radius: 0; }
.light select { text-shadow: none; }
.combo.w170 { width: 170px; height: 19px; }
.asset { display: flex; align-items: center; gap: 11px; color: #d4d4d4; }
.mat { gap: 6px; padding-left: 7px; }
.thumb { width: 66px; height: 66px; background: linear-gradient(#4a4a4a, #606060); border: 1px solid #1c1c1c; border-bottom: 3px solid #fff; display: flex; align-items: center; justify-content: center; font-size: 10px; }
.matsel { display: flex; flex-direction: column; gap: 5px; }
.matsel .asset { padding-left: 6px; }
.scroll { position: absolute; right: 3px; top: 0; width: 11px; height: 183px; background: #fff; border: 1px solid #222; }

.anim { width: 273px; flex: none; }
.animrow { display: flex; align-items: center; gap: 2px; margin: -2px 0 0 -1px; }
.add { width: 49px; height: 21px; gap: 3px; background: #4aa04e; border: 1px solid #327a36; color: #fff; text-shadow: 1px 1px #222; }
.results { flex: 1; }
.logpane { display: flex; flex-direction: column; padding: 4px 4px 0; }
.log { flex: 1; background: #222; }
.clear { align-self: flex-end; height: 36px; padding-right: 5px; color: #777; }

.popup { position: absolute; left: 4px; top: 59px; width: 177px; padding: 1px; background: #191919; border: 1px solid #000; }
.mh { font-size: 11px; line-height: 15px; padding-left: 1px; color: #8f8f8f; }
hr + .mh { line-height: 17px; }
.popup button { width: 100%; height: 22px; justify-content: flex-start; padding: 0 4px 0 17px; color: #e0e0e0; }
.popup .ic { gap: 5px; }
.popup .ic svg { width: 15px; height: 16px; margin-left: 1px; }
.popup button:disabled { color: #6e6e6e; }
.popup .hot { background: #dca10c; color: #111; border-radius: 2px; }
.popup kbd { margin-left: auto; font: inherit; color: #828282; }
.popup i { margin: 0 -3px 0 auto; border: 4px solid transparent; border-left: 4px solid #ccc; border-right: 0; }
.popup hr { border: 0; height: 1px; margin: 3px 1px; background: #5c5c5c; }
.tooltip { position: absolute; left: 185px; top: 297px; border: 2px solid #0a0a0a; background: #eee; color: #111; padding: 7px 9px 8px; }
.callout { position: absolute; }
.c1 { left: 111px; top: 189px; width: 220px; height: 112px; }
.c2 { left: 1494px; top: 66px; width: 140px; height: 48px; }
.watermark { position: absolute; right: 13px; bottom: 6px; font-size: 16px; line-height: 18px; color: #a8a8a8; }
```
FILE: grid.js
```js
const host = document.getElementById("viewport");
const svg = document.getElementById("grid");
const OX = 177, OY = 132, LEFT = 18, TOP = 17;
const CELL = 319 / 30, TICK = 333 / 20;

function add(tag, attrs, text) {
  const el = document.createElementNS("http://www.w3.org/2000/svg", tag);
  for (const k in attrs) el.setAttribute(k, attrs[k]);
  if (text !== undefined) el.textContent = text;
  svg.appendChild(el);
}
function rect(x, y, width, height, fill) { add("rect", { x, y, width, height, fill }); }

function draw() {
  svg.replaceChildren();
  const w = host.clientWidth, h = host.clientHeight;
  rect(LEFT, TOP, w, h, "#262626");
  for (const pass of ["minor", "major"]) {
    for (let i = -20; i < 200; i++) {
      const major = i % 10 === 0;
      if (major !== (pass === "major")) continue;
      const color = i === 0 ? "#000" : major ? "#151515" : "#363636";
      const x = Math.round(OX - 1 + i * CELL), y = Math.round(OY - 1 + i * CELL);
      if (x > LEFT && x < w) rect(x, TOP, 1, h, color);
      if (y > TOP && y < h) rect(LEFT, y, w, 1, color);
    }
  }
  rect(LEFT, TOP - 1, w, 1, "#6a6a6a");
  rect(LEFT - 1, TOP - 1, 1, h, "#6a6a6a");
  for (let i = -9; i < 80; i++) {
    const len = i % 5 === 0 ? 5 : 2;
    const x = Math.round(OX + i * TICK), y = Math.round(OY + i * TICK);
    if (x > LEFT && x < w) rect(x, TOP - 1 - len, 1, len, "#6a6a6a");
    if (y > TOP && y < h) rect(LEFT - 1 - len, y, len, 1, "#6a6a6a");
    if (i >= 0 && i % 10 === 0) {
      const label = String(i * 50);
      if (x < w) add("text", { x, y: 11 }, label);
      const start = y + 4 - Math.floor(label.length / 2) * 11;
      if (y < h) [...label].forEach((c, n) => add("text", { x: 6, y: start + n * 11 }, c));
    }
  }
}
draw();
addEventListener("resize", draw);
```
